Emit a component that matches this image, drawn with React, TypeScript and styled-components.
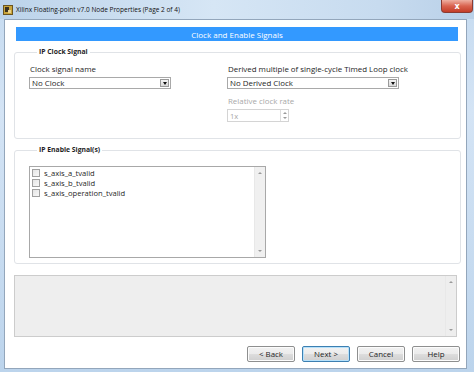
import React from 'react';
import styled, { createGlobalStyle } from 'styled-components';

const GlobalStyle = createGlobalStyle`
  html, body {
    margin: 0;
    padding: 0;
    background: #ffffff;
  }
  * {
    box-sizing: border-box;
  }
`;

const Window = styled.div`
  width: 474px;
  height: 372px;
  display: flex;
  flex-direction: column;
  background: linear-gradient(180deg, #c6dbf0 0%, #d4e4f5 30%, #bcd4ec 100%);
  font-family: 'Open Sans', 'Noto Sans', sans-serif;
  color: #1e1e1e;
  overflow: hidden;
`;

const TitleBar = styled.div`
  height: 19px;
  display: flex;
  align-items: center;
  padding-left: 3px;
  gap: 3px;
  background: linear-gradient(90deg, #bcd3ea 0%, #d6e6f5 45%, #c7dbef 80%, #b9d0e8 100%);
`;

const TitleText = styled.span`
  font-size: 6.5px;
  color: #101010;
  flex: 1;
  white-space: nowrap;
`;

const CloseButton = styled.div`
  width: 32px;
  height: 13px;
  align-self: flex-start;
  margin-right: 1px;
  border: 1px solid #8a3b32;
  border-top: none;
  border-radius: 0 0 4px 4px;
  background: linear-gradient(180deg, #eeb0a2 0%, #d9634f 50%, #c33d28 100%);
  color: #ffffff;
  font-size: 8px;
  font-weight: bold;
  display: flex;
  align-items: center;
  justify-content: center;
  font-family: 'DejaVu Sans', sans-serif;
`;

const Client = styled.div`
  flex: 1;
  margin: 0 7px 3px 4px;
  background: #ffffff;
  border: 1px solid #93a6bb;
  display: flex;
  flex-direction: column;
  padding: 7px 5px 0 9px;
`;

const Banner = styled.div`
  height: 14px;
  margin: 0 3px 0 2px;
  background: #3399ff;
  color: #ffffff;
  font-size: 8px;
  display: flex;
  align-items: center;
  justify-content: center;
`;

const Group = styled.fieldset<{ $height: number; $top: number }>`
  height: ${(p) => p.$height}px;
  margin: ${(p) => p.$top}px 0 0 0;
  padding: 0 14px;
  border: 1px solid #e0e3e7;
  border-radius: 3px;
  min-width: 0;
`;

const Legend = styled.legend`
  font-size: 6.8px;
  font-weight: bold;
  padding: 0 2px;
  margin-left: 8px;
  line-height: 10px;
`;

const ClockGrid = styled.div`
  display: grid;
  grid-template-columns: 142px 172px;
  column-gap: 56px;
  padding-top: 7px;
`;

const Field = styled.div`
  display: flex;
  flex-direction: column;
`;

const Label = styled.div<{ $disabled?: boolean }>`
  font-size: 7.9px;
  line-height: 10px;
  height: 10px;
  color: ${(p) => (p.$disabled ? '#a8a8a8' : '#1e1e1e')};
  white-space: nowrap;
  margin-left: 1px;
`;

const Combo = styled.div`
  height: 12px;
  border: 1px solid #a9a9a9;
  display: flex;
  align-items: center;
  font-size: 7.9px;
  padding-left: 2px;
  margin-top: 3px;
  background: #ffffff;
`;

const ComboText = styled.span`
  flex: 1;
`;

const ComboArrow = styled.div`
  width: 9px;
  height: 8px;
  margin-right: 1px;
  border: 1px solid #9a9a9a;
  background: linear-gradient(180deg, #f4f4f4, #dadada);
  display: flex;
  align-items: center;
  justify-content: center;
  &::after {
    content: '';
    border-left: 2.5px solid transparent;
    border-right: 2.5px solid transparent;
    border-top: 3px solid #111;
  }
`;

const Spinner = styled.div`
  width: 62px;
  height: 13px;
  margin-top: 3px;
  border: 1px solid #d4d4d4;
  display: flex;
  align-items: center;
  padding-left: 2px;
  font-size: 7.6px;
  color: #a8a8a8;
`;

const SpinButtons = styled.div`
  margin-left: auto;
  width: 8px;
  height: 11px;
  border-left: 1px solid #dedede;
  display: flex;
  flex-direction: column;
  align-items: center;
  justify-content: space-around;
`;

const Tri = styled.span<{ $up?: boolean }>`
  width: 0;
  height: 0;
  border-left: 2px solid transparent;
  border-right: 2px solid transparent;
  ${(p) => (p.$up ? 'border-bottom: 2px solid #9a9a9a;' : 'border-top: 2px solid #9a9a9a;')}
`;

const ListBox = styled.div`
  width: 237px;
  height: 92px;
  margin-top: 11px;
  border: 1px solid #a8a8a8;
  display: flex;
`;

const ListItems = styled.div`
  flex: 1;
  padding: 1px 0 0 2px;
`;

const Item = styled.label`
  display: flex;
  align-items: center;
  gap: 4px;
  height: 10px;
  font-size: 7.6px;
`;

const Check = styled.span`
  width: 8px;
  height: 8px;
  border: 1px solid #a0a0a0;
  background: linear-gradient(135deg, #e4e4e4, #f8f8f8);
`;

const ScrollBar = styled.div<{ $bg?: string }>`
  width: 11px;
  background: ${(p) => p.$bg || '#f0f0f0'};
  border-left: 1px solid #e8e8e8;
  display: flex;
  flex-direction: column;
  justify-content: space-between;
  align-items: center;
  padding: 5px 0;
`;

const MessageArea = styled.div`
  height: 62px;
  margin: 11px 4px 0 0;
  background: #eeeeee;
  border: 1px solid #cccccc;
  display: flex;
  justify-content: flex-end;
`;

const ButtonRow = styled.div`
  display: flex;
  justify-content: flex-end;
  gap: 7px;
  margin-top: 9px;
  padding-right: 1px;
`;

const Button = styled.div<{ $default?: boolean }>`
  width: 48px;
  height: 16px;
  border: 1px solid ${(p) => (p.$default ? '#3c7fb1' : '#8e8f8f')};
  border-radius: 2px;
  box-shadow: inset 0 0 0 1px ${(p) => (p.$default ? '#b6e1fb' : '#fcfcfc')};
  background: linear-gradient(180deg, #f2f2f2 0%, #ebebeb 50%, #dddddd 51%, #cfcfcf 100%);
  font-size: 7.9px;
  display: flex;
  align-items: center;
  justify-content: center;
`;

function AppIcon() {
  return (
    <svg width="10" height="10" viewBox="0 0 10 10">
      <rect x="0.5" y="0.5" width="9" height="9" fill="#c9a53a" stroke="#6b5520" />
      <rect x="2" y="2" width="4" height="5" fill="#3b3220" />
      <rect x="5" y="5" width="3" height="3" fill="#e8d08a" />
    </svg>
  );
}

export default function App() {
  return (
    <Window>
      <GlobalStyle />
      <TitleBar>
        <AppIcon />
        <TitleText>Xilinx Floating-point v7.0 Node Properties (Page 2 of 4)</TitleText>
        <CloseButton>x</CloseButton>
      </TitleBar>
      <Client>
        <Banner>Clock and Enable Signals</Banner>
        <Group $height={92} $top={6}>
          <Legend>IP Clock Signal</Legend>
          <ClockGrid>
            <Field>
              <Label>Clock signal name</Label>
              <Combo>
                <ComboText>No Clock</ComboText>
                <ComboArrow />
              </Combo>
            </Field>
            <Field>
              <Label>Derived multiple of single-cycle Timed Loop clock</Label>
              <Combo>
                <ComboText>No Derived Clock</ComboText>
                <ComboArrow />
              </Combo>
              <Label $disabled style={{ marginTop: 7 }}>Relative clock rate</Label>
              <Spinner>
                1x
                <SpinButtons>
                  <Tri $up />
                  <Tri />
                </SpinButtons>
              </Spinner>
            </Field>
          </ClockGrid>
        </Group>
        <Group $height={119} $top={6}>
          <Legend>IP Enable Signal(s)</Legend>
          <ListBox>
            <ListItems>
              <Item><Check />s_axis_a_tvalid</Item>
              <Item><Check />s_axis_b_tvalid</Item>
              <Item><Check />s_axis_operation_tvalid</Item>
            </ListItems>
            <ScrollBar>
              <Tri $up />
              <Tri />
            </ScrollBar>
          </ListBox>
        </Group>
        <MessageArea>
          <ScrollBar $bg="#eeeeee">
            <Tri $up />
            <Tri />
          </ScrollBar>
        </MessageArea>
        <ButtonRow>
          <Button>&lt; Back</Button>
          <Button $default>Next &gt;</Button>
          <Button>Cancel</Button>
          <Button>Help</Button>
        </ButtonRow>
      </Client>
    </Window>
  );
}
